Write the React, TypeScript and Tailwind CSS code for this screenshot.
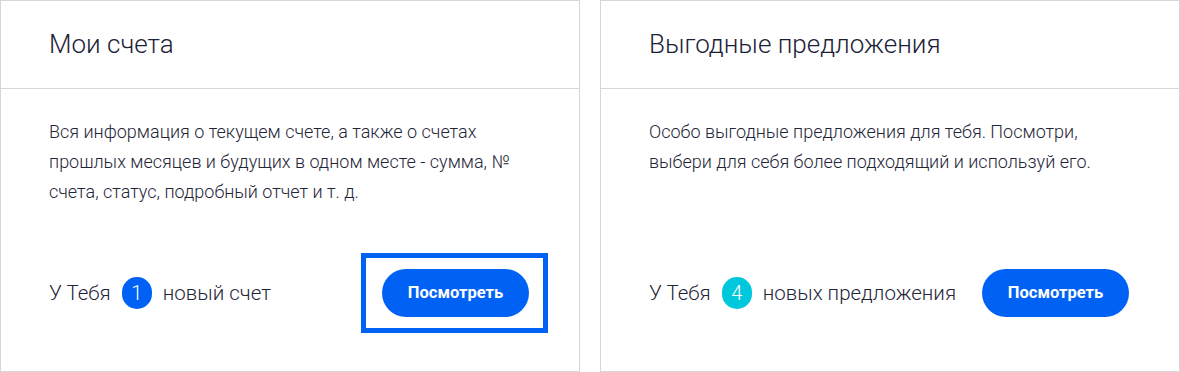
import React from "react";

const font = { fontFamily: "Roboto, 'Noto Sans', sans-serif" };

function Card({
  title,
  text,
  count,
  badgeClass,
  suffix,
  highlighted,
}: {
  title: string;
  text: string;
  count: number;
  badgeClass: string;
  suffix: string;
  highlighted?: boolean;
}) {
  return (
    <div className="flex h-[372px] w-[580px] flex-col border border-[#d6d6d6] bg-white">
      <div className="flex h-[88px] items-center border-b border-[#d6d6d6] px-[48px]">
        <h2 className="text-[26px] font-light text-[#1b2238]">{title}</h2>
      </div>
      <div className="flex flex-1 flex-col px-[48px] pb-[54px] pt-[28px]">
        <p className="text-[18px] font-light leading-[30px] text-[#1f2638]">{text}</p>
        <div className="mt-auto flex items-center justify-between">
          <div className="flex items-center gap-[11px] text-[20.5px] font-light text-[#1f2638]">
            <span>У Тебя</span>
            <span
              className={`flex h-[32px] w-[30px] items-center justify-center rounded-full text-[20px] font-light text-white ${badgeClass}`}
            >
              {count}
            </span>
            <span>{suffix}</span>
          </div>
          <div className="relative mr-[2px]">
            {highlighted && (
              <div className="absolute bottom-[-16px] left-[-21px] right-[-19px] top-[-16px] border-[5px] border-[#0062f5]" />
            )}
            <button className="relative h-[48px] w-[147px] rounded-full bg-[#0062f5] text-[16.5px] font-bold text-white">
              Посмотреть
            </button>
          </div>
        </div>
      </div>
    </div>
  );
}

export default function App() {
  return (
    <div className="flex h-[372px] w-[1180px] gap-[20px] bg-white" style={font}>
      <Card
        title="Мои счета"
        text="Вся информация о текущем счете, а также о счетах прошлых месяцев и будущих в одном месте - сумма, № счета, статус, подробный отчет и т. д."
        count={1}
        badgeClass="bg-[#0062f5]"
        suffix="новый счет"
        highlighted
      />
      <Card
        title="Выгодные предложения"
        text="Особо выгодные предложения для тебя. Посмотри, выбери для себя более подходящий и используй его."
        count={4}
        badgeClass="bg-[#00c8dc]"
        suffix="новых предложения"
      />
    </div>
  );
}
